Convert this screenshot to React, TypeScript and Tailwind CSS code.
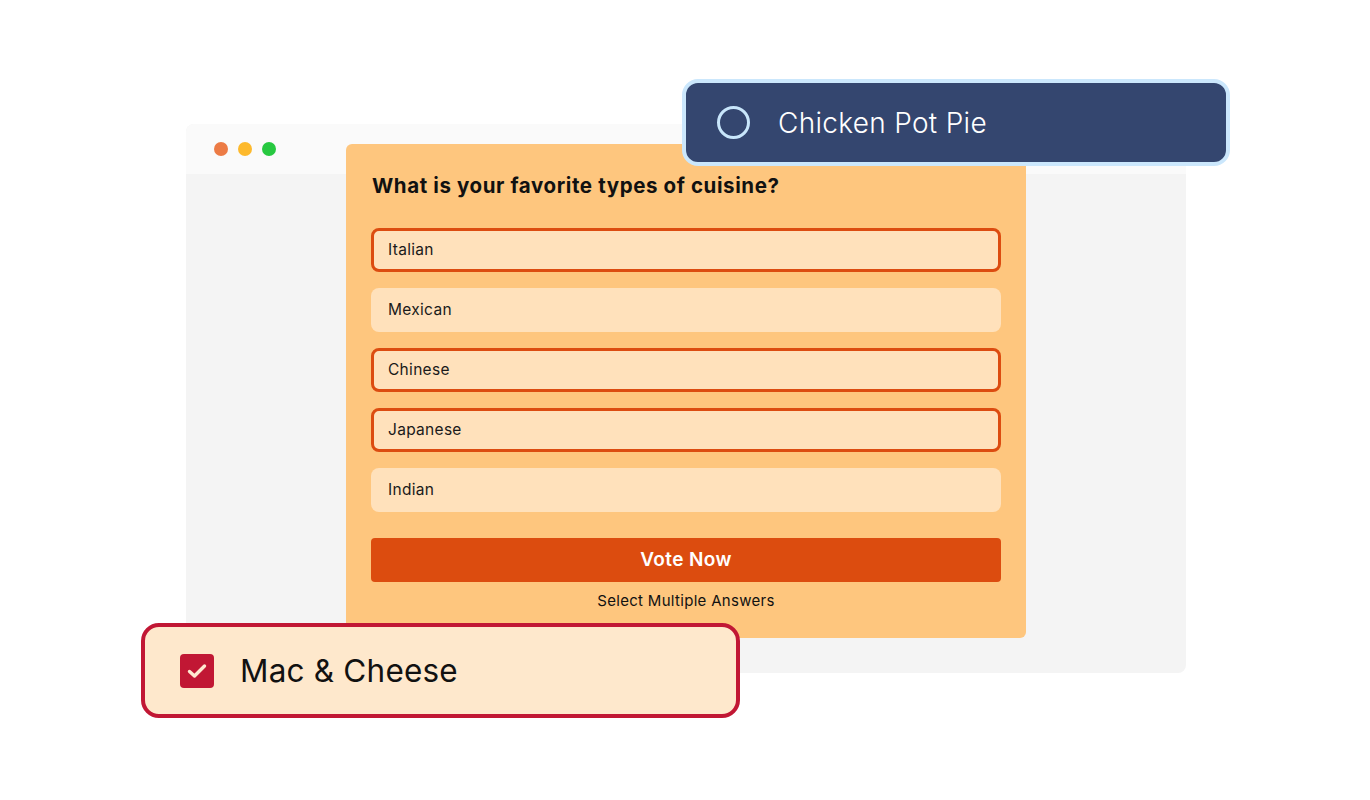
import React from "react";

const options = [
  { label: "Italian", selected: true },
  { label: "Mexican", selected: false },
  { label: "Chinese", selected: true },
  { label: "Japanese", selected: true },
  { label: "Indian", selected: false },
];

export default function App() {
  return (
    <div
      className="relative w-[1370px] h-[800px] bg-white overflow-hidden"
      style={{ fontFamily: "Inter, 'Noto Sans', sans-serif" }}
    >
      <div className="pt-[124px] pl-[186px]">
        {/* Browser window */}
        <div className="relative w-[1000px] h-[549px] rounded-[8px] bg-[#f4f4f4] flex flex-col">
          <div className="h-[50px] bg-[#fafafa] rounded-t-[8px] flex items-center gap-[10px] pl-[28px]">
            <span className="w-[14px] h-[14px] rounded-full bg-[#ec7b45]" />
            <span className="w-[14px] h-[14px] rounded-full bg-[#fdb92c]" />
            <span className="w-[14px] h-[14px] rounded-full bg-[#27c840]" />
          </div>

          {/* Poll card */}
          <div className="absolute left-[160px] top-[20px] w-[680px] h-[494px] rounded-[6px] bg-[#fec67e] flex flex-col px-[25px] pt-[28px]">
            <h2 className="text-[20.5px] leading-[28px] font-bold text-[#111] tracking-[0.6px] pl-[1px]">
              What is your favorite types of cuisine?
            </h2>
            <div className="mt-[28px] flex flex-col gap-[16px]">
              {options.map((o) => (
                <div
                  key={o.label}
                  className={
                    o.selected
                      ? "h-[44px] rounded-[8px] bg-[#ffe1bb] border-[3px] border-[#dc4c10] flex items-center pl-[14px] text-[15.5px] tracking-[0.3px] text-[#1a1a1a]"
                      : "h-[44px] rounded-[8px] bg-[#ffe1bb] border-[3px] border-transparent flex items-center pl-[14px] text-[15.5px] tracking-[0.3px] text-[#1a1a1a]"
                  }
                >
                  {o.label}
                </div>
              ))}
            </div>
            <button className="mt-[26px] h-[44px] w-full rounded-[4px] bg-[#dc4c0f] text-white text-[19px] tracking-[0.4px] font-semibold flex items-center justify-center">
              Vote Now
            </button>
            <div className="mt-[9px] text-center text-[15px] tracking-[0.3px] leading-[20px] text-[#111]">
              Select Multiple Answers
            </div>
          </div>
        </div>
      </div>

      {/* Chicken Pot Pie floating option */}
      <div className="absolute left-[682px] top-[79px] w-[548px] h-[87px] rounded-[16px] border-[4px] border-[#cbe7fc] bg-[#34466f] flex items-center pl-[31px]">
        <span className="w-[33px] h-[33px] rounded-full border-[3px] border-[#c8e6fb]" />
        <span className="ml-[28px] text-[28px] text-white font-light tracking-[0.3px]">
          Chicken Pot Pie
        </span>
      </div>

      {/* Mac & Cheese floating option */}
      <div className="absolute left-[141px] top-[623px] w-[599px] h-[95px] rounded-[18px] border-[4px] border-[#c11734] bg-[#fee8cc] flex items-center pl-[35px]">
        <span className="w-[34px] h-[34px] rounded-[4px] bg-[#c11734] flex items-center justify-center">
          <svg width="22" height="18" viewBox="0 0 22 18" fill="none">
            <path
              d="M3.5 9.5 L8.5 14 L18.5 4"
              stroke="#ffe8d0"
              strokeWidth="3.4"
              strokeLinecap="round"
              strokeLinejoin="round"
            />
          </svg>
        </span>
        <span className="ml-[26px] text-[31.5px] tracking-[0.2px] text-[#111]">Mac &amp; Cheese</span>
      </div>
    </div>
  );
}
